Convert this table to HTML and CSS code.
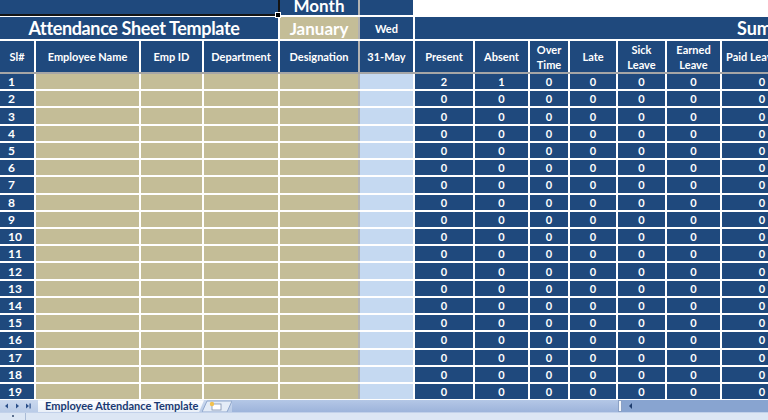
FILE: index.html
```html
<!DOCTYPE html>
<html>
<head>
<meta charset="utf-8">
<link rel="stylesheet" href="styles.css">
</head>
<body>
<div class="sheet">
  <div class="grid top">
    <div class="c blue span4 sel"><span class="handle"></span></div>
    <div class="c blue month"><span class="mtext">Month</span></div>
    <div class="c blue col6"></div>
    <div class="blank"></div>

    <div class="c blue span4 title">Attendance Sheet Template</div>
    <div class="c tan big">January</div>
    <div class="c blue col6">Wed</div>
    <div class="c blue summary">Summary</div>

    <div class="c blue">Sl#</div>
    <div class="c blue">Employee Name</div>
    <div class="c blue">Emp ID</div>
    <div class="c blue">Department</div>
    <div class="c blue">Designation</div>
    <div class="c blue col6">31-May</div>
    <div class="c blue">Present</div>
    <div class="c blue">Absent</div>
    <div class="c blue two">Over<br>Time</div>
    <div class="c blue">Late</div>
    <div class="c blue two">Sick<br>Leave</div>
    <div class="c blue two">Earned<br>Leave</div>
    <div class="c blue paid">Paid Leave</div>
  </div>
  <div class="sep"></div>
  <div class="grid data" id="data"></div>
  <div class="tabs">
    <div class="nav">
      <svg width="36" height="12" viewBox="0 0 36 12">
        <path d="M5 6 L8 3.5 L8 8.5 Z" fill="#2b4f8a"/>
        <path d="M16 3.5 L19 6 L16 8.5 Z" fill="#2b4f8a"/>
        <path d="M26 3.5 L29 6 L26 8.5 Z" fill="#2b4f8a"/>
        <rect x="29.5" y="3.5" width="1.2" height="5" fill="#2b4f8a"/>
      </svg>
    </div>
    <div class="tab">Employee Attendance Template</div>
    <div class="newtab">
      <svg width="30" height="12" viewBox="0 0 30 12">
        <path d="M0 12 L5 1 L30 1 L25 12 Z" fill="#e4ecf7" stroke="#8ea6cc" stroke-width="1"/>
        <rect x="10" y="4" width="9" height="6" fill="#fff" stroke="#7a8fae" stroke-width="0.8"/>
        <circle cx="10" cy="4" r="2.2" fill="#f2c14e"/>
      </svg>
    </div>
    <div class="fill"></div>
    <div class="split"></div>
    <div class="scroll">
      <svg width="10" height="12" viewBox="0 0 10 12"><path d="M3 6 L6 3 L6 9 Z" fill="#1f3d6d"/></svg>
    </div>
  </div>
  <div class="status"><span class="tick"></span><span class="div"></span></div>
</div>
<script>
  var d = document.getElementById('data');
  var html = '';
  for (var i = 1; i <= 19; i++) {
    var v = i === 1 ? [2,1,0,0,0,0,0] : [0,0,0,0,0,0,0];
    html += '<div class="c blue num">' + i + '</div>';
    html += '<div class="tan"></div><div class="tan"></div><div class="tan"></div><div class="tan"></div>';
    html += '<div class="light col6"></div>';
    for (var j = 0; j < 7; j++) html += '<div class="c blue">' + v[j] + '</div>';
  }
  d.innerHTML = html;
</script>
</body>
</html>
```
FILE: styles.css
```css
html, body {
  margin: 0;
  padding: 0;
  background: #ffffff;
  overflow: hidden;
}
.sheet {
  width: 768px;
  height: 420px;
  overflow: hidden;
  font-family: Lato, "Open Sans", sans-serif;
}
.grid {
  display: grid;
  grid-template-columns: 34px 103px 61px 74px 78px 53px 58px 53px 38px 46px 47px 53px 80px;
  column-gap: 2px;
  row-gap: 2px;
  width: 802px;
}
.top {
  grid-template-rows: 15px 22px 31px;
}
.data {
  grid-auto-rows: 15.22px;
  margin-bottom: 1px;
}
.sep {
  height: 2px;
  width: 802px;
  background: #a6a6a6;
}
.c {
  display: flex;
  align-items: center;
  justify-content: center;
  color: #ffffff;
  font-weight: 700;
  font-size: 11px;
  line-height: 13px;
  white-space: nowrap;
  overflow: hidden;
  text-align: center;
}
.blue { background: #1f497d; }
.tan { background: #c4bd97; }
.light { background: #c5d9f1; }
.col6 { box-shadow: -2px 0 0 #b2b2b2; }
.span4 { grid-column: 1 / span 4; }
.blank { grid-column: 7 / span 7; }
.sel {
  position: relative;
  overflow: visible;
}
.sel::after {
  content: "";
  position: absolute;
  left: -2px;
  top: -2px;
  right: -2px;
  bottom: -1px;
  border: 2px solid #141414;
}
.handle {
  position: absolute;
  right: -3px;
  bottom: -3px;
  width: 4px;
  height: 4px;
  background: #000;
  border: 1px solid #fff;
  z-index: 2;
}
.month {
  font-size: 17px;
  align-items: flex-start;
}
.mtext {
  display: block;
  line-height: 15px;
  margin-top: -2px;
}
.title {
  font-size: 18px;
  letter-spacing: -0.35px;
  padding-right: 10px;
}
.big {
  font-size: 17px;
  justify-content: center;
}
.summary {
  grid-column: 7 / span 7;
  justify-content: flex-start;
  padding-left: 322px;
  font-size: 18px;
}
.two { line-height: 15px; }
.paid {
  justify-content: flex-start;
  padding-left: 4px;
}
.num {
  justify-content: flex-start;
  padding-left: 8px;
  font-size: 12px;
}
.tabs {
  display: flex;
  height: 12px;
  background: linear-gradient(#cad8ee, #b9cbe7);
}
.nav {
  width: 38px;
  flex: none;
}
.nav svg { display: block; }
.tab {
  width: 166px;
  flex: none;
  background: linear-gradient(#ffffff, #e9eff8);
  clip-path: polygon(0 0, 100% 0, calc(100% - 5px) 100%, 0 100%);
  color: #1a3a72;
  font-weight: 700;
  font-size: 11px;
  line-height: 12px;
  padding-left: 7px;
  box-sizing: border-box;
  white-space: nowrap;
  overflow: hidden;
}
.newtab {
  width: 30px;
  flex: none;
  margin-left: -2px;
}
.newtab svg { display: block; }
.fill {
  flex: 1;
  background: linear-gradient(#b4c7e6, #9db4db);
}
.split {
  width: 4px;
  flex: none;
  background: #f4f7fb;
  border: 1px solid #8aa0c4;
  box-sizing: border-box;
}
.scroll {
  width: 142px;
  flex: none;
  background: #88a4d0;
  padding-left: 4px;
}
.scroll svg { display: block; }
.status {
  height: 8px;
  background: #dce6f4;
  position: relative;
  border-top: 1px solid #c2d1ea;
  box-sizing: border-box;
}
.tick {
  position: absolute;
  left: 12px;
  top: 2px;
  width: 2px;
  height: 2px;
  background: #5b6f8f;
}
.div {
  position: absolute;
  left: 25px;
  top: 0;
  width: 1px;
  height: 8px;
  background: #a9bbd6;
}
```
